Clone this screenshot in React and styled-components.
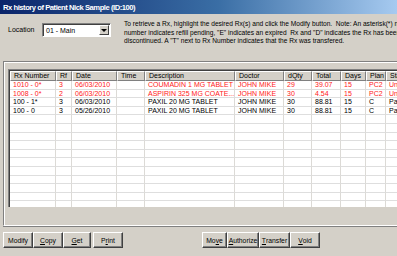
import styled, { createGlobalStyle } from 'styled-components';

const GlobalStyle = createGlobalStyle`
    body {
        margin: 0;
        background: #d4d0c8;
        font-family: "Liberation Sans", Arial, sans-serif;
    }
`;

const Window = styled.div`
    width: 397px;
    height: 256px;
    overflow: hidden;
    background: #d4d0c8;
    display: flex;
    flex-direction: column;
`;

const TitleBar = styled.div`
    height: 14px;
    flex: none;
    background: linear-gradient(to right, #0a246a 0%, #3a6ea5 55%, #a6caf0 100%);
    display: flex;
    align-items: center;
    padding-left: 3px;
`;

const TitleText = styled.span`
    color: #fff;
    font-family: "Liberation Sans", Arial, sans-serif;
    font-weight: bold;
    font-size: 7.6px;
    letter-spacing: -0.45px;
    white-space: nowrap;
`;

const TopRow = styled.div`
    height: 47px;
    flex: none;
    display: flex;
    align-items: flex-start;
    padding: 9px 0 0 8px;
    box-sizing: border-box;
`;

const Label = styled.div`
    flex: none;
    width: 34px;
    font-size: 7px;
    line-height: 9px;
    margin-top: 2px;
    color: #000;
`;

const Select = styled.div`
    flex: none;
    width: 69px;
    height: 14px;
    box-sizing: border-box;
    background: #fff;
    border-top: 1px solid #808080;
    border-left: 1px solid #808080;
    border-right: 1px solid #fff;
    border-bottom: 1px solid #fff;
    box-shadow: inset 1px 1px 0 #404040;
    display: flex;
    align-items: center;
    font-size: 7px;
    padding-left: 3px;
`;

const SelectText = styled.span`
    flex: 1;
    margin-top: 1px;
`;

const Arrow = styled.div`
    width: 10px;
    height: 10px;
    margin-right: 1px;
    background: #d4d0c8;
    border-top: 1px solid #fff;
    border-left: 1px solid #fff;
    border-right: 1px solid #404040;
    border-bottom: 1px solid #404040;
    box-sizing: border-box;
    display: flex;
    align-items: center;
    justify-content: center;
    &::after {
        content: '';
        border-left: 3px solid transparent;
        border-right: 3px solid transparent;
        border-top: 3px solid #000;
    }
`;

const Instructions = styled.div`
    flex: none;
    margin-left: 13px;
    margin-top: -3px;
    font-size: 6.6px;
    line-height: 8.6px;
    white-space: nowrap;
    color: #000;
`;

const Panel = styled.div`
    margin: 0 0 0 3px;
    height: 165px;
    flex: none;
    border-top: 1px solid #808080;
    border-left: 1px solid #808080;
    border-bottom: 1px solid #fff;
    box-shadow: inset 1px 1px 0 #fff, 0 1px 0 #808080;
    padding: 7px 0 0 4px;
    box-sizing: border-box;
`;

const Table = styled.div`
    height: 138px;
    background: #fff;
    border-top: 1px solid #808080;
    border-left: 1px solid #808080;
    box-shadow: inset 1px 1px 0 #404040;
    overflow: hidden;
    padding: 1px 0 0 1px;
    box-sizing: border-box;
`;

const cols = '46px 16px 45px 28px 90px 49px 28px 29px 25px 20px 60px';

const HeaderRow = styled.div`
    display: grid;
    grid-template-columns: ${cols};
    height: 10px;
`;

const HeaderCell = styled.div`
    background: #d4d0c8;
    border-top: 1px solid #fff;
    border-left: 1px solid #fff;
    border-right: 1px solid #808080;
    border-bottom: 1px solid #808080;
    box-sizing: border-box;
    font-size: 7px;
    line-height: 8px;
    padding-left: 3px;
    white-space: nowrap;
    overflow: hidden;
`;

const Row = styled.div`
    display: grid;
    grid-template-columns: ${cols};
    height: 8.6px;
    color: ${p => (p.$red ? '#ff2020' : '#000')};
`;

const Cell = styled.div`
    border-right: 1px solid #dcdad6;
    border-bottom: 1px solid #dedede;
    box-sizing: border-box;
    font-size: 7px;
    line-height: 8px;
    padding-left: 3px;
    white-space: nowrap;
    overflow: hidden;
`;

const ButtonBar = styled.div`
    display: flex;
    padding: 6px 0 0 3px;
`;

const Group = styled.div`
    display: flex;
    margin-right: ${p => p.$gap || 0}px;
`;

const Button = styled.div`
    width: ${p => p.$w || 30}px;
    height: 16px;
    box-sizing: border-box;
    background: #d4d0c8;
    border-top: 1px solid #fff;
    border-left: 1px solid #fff;
    border-right: 1px solid #404040;
    border-bottom: 1px solid #404040;
    box-shadow: inset -1px -1px 0 #808080;
    font-size: 6.8px;
    display: flex;
    align-items: center;
    justify-content: center;
    margin-right: ${p => p.$mr || 0}px;
    u { text-decoration: underline; }
`;

const headers = ['Rx Number', 'Rf', 'Date', 'Time', 'Description', 'Doctor', 'dQty', 'Total', 'Days', 'Plan', 'Status'];

const rows = [
    { red: true, c: ['1010 - 0*', '3', '06/03/2010', '', 'COUMADIN 1 MG TABLET', 'JOHN MIKE', '29', '39.07', '15', 'PC2', 'Unfilled'] },
    { red: true, c: ['1008 - 0*', '2', '06/03/2010', '', 'ASPIRIN 325 MG COATE...', 'JOHN MIKE', '30', '4.54', '15', 'PC2', 'Unfilled'] },
    { c: ['100 - 1*', '3', '06/03/2010', '', 'PAXIL 20 MG TABLET', 'JOHN MIKE', '30', '88.81', '15', 'C', 'Paid'] },
    { c: ['100 - 0', '3', '05/26/2010', '', 'PAXIL 20 MG TABLET', 'JOHN MIKE', '30', '88.81', '15', 'C', 'Paid'] },
];

const blank = Array.from({ length: 11 }, () => ({ c: Array(11).fill('') }));

const App = () => {
    return (
        <Window>
            <GlobalStyle />
            <TitleBar>
                <TitleText>Rx history of Patient Nick Sample (ID:100)</TitleText>
            </TitleBar>
            <TopRow>
                <Label>Location</Label>
                <Select>
                    <SelectText>01 - Main</SelectText>
                    <Arrow />
                </Select>
                <Instructions>
                    To retrieve a Rx, highlight the desired Rx(s) and click the Modify button.&nbsp; Note: An asterisk(*) next to Rx<br />
                    number indicates refill pending, "E" indicates an expired&nbsp; Rx and "D" indicates the Rx has been<br />
                    discontinued. A "T" next to Rx Number indicates that the Rx was transfered.
                </Instructions>
            </TopRow>
            <Panel>
                <Table>
                    <HeaderRow>
                        {headers.map(h => <HeaderCell key={h}>{h}</HeaderCell>)}
                    </HeaderRow>
                    {[...rows, ...blank].map((r, i) => (
                        <Row key={i} $red={r.red}>
                            {r.c.map((v, j) => <Cell key={j}>{v}</Cell>)}
                        </Row>
                    ))}
                </Table>
            </Panel>
            <ButtonBar>
                <Group $gap={79}>
                    <Button>Modify</Button>
                    <Button><u>C</u>opy</Button>
                    <Button $w={28} $mr={2}><u>G</u>et</Button>
                    <Button>P<u>r</u>int</Button>
                </Group>
                <Group>
                    <Button $w={25}>Mo<u>v</u>e</Button>
                    <Button $w={32}><u>A</u>uthorize</Button>
                    <Button $w={31}><u>T</u>ransfer</Button>
                    <Button><u>V</u>oid</Button>
                </Group>
            </ButtonBar>
        </Window>
    );
};

export default App;
